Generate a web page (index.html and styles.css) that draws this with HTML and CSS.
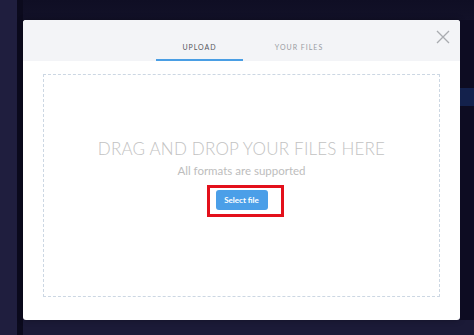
FILE: index.html
```html
<!DOCTYPE html>
<html lang="en">
<head>
    <meta charset="UTF-8">
    <meta name="viewport" content="width=device-width, initial-scale=1.0">
    <title>Upload</title>
    <link rel="stylesheet" href="styles.css">
</head>
<body>
    <div class="backdrop">
        <div class="side-band"></div>
        <div class="modal">
            <div class="modal-header">
                <div class="tabs">
                    <div class="tab active">UPLOAD</div>
                    <div class="tab">YOUR FILES</div>
                </div>
                <svg class="close" width="14" height="14" viewBox="0 0 14 14">
                    <path d="M1 1 L13 13 M13 1 L1 13" stroke="#a9abb0" stroke-width="1.3" fill="none"/>
                </svg>
            </div>
            <div class="modal-body">
                <div class="dropzone">
                    <div class="drop-title">DRAG AND DROP YOUR FILES HERE</div>
                    <div class="drop-sub">All formats are supported</div>
                    <div class="highlight">
                        <button class="button">Select file</button>
                    </div>
                </div>
            </div>
        </div>
        <div class="right-band"></div>
    </div>
</body>
</html>
```

FILE: styles.css
```css
* { padding: 0; margin: 0; box-sizing: border-box; }
body {
    font-family: "Lato", "Open Sans", sans-serif;
    background-color: #1b1a37;
    width: 474px;
    height: 335px;
    overflow: hidden;
}
.backdrop {
    display: flex;
    height: 335px;
    background: linear-gradient(#0f0e24 0, #121128 20px, #1b1a37 300px);
}
.side-band {
    width: 23px;
    flex-shrink: 0;
    background-color: #1f1e3e;
    border-right: 6px solid #0b0a1d;
}
.modal {
    width: 437px;
    flex-shrink: 0;
    height: 300px;
    margin-top: 20px;
    background-color: #fff;
    border-radius: 3px;
    box-shadow: 0 0 6px rgba(0, 0, 0, 0.3);
    display: flex;
    flex-direction: column;
}
.right-band {
    flex: 1;
    margin-top: 20px;
    height: 300px;
    background: linear-gradient(#0d0c22 0, #0d0c22 68px, #13214c 68px, #13214c 86px, #0d0c22 86px);
}
.modal-header {
    height: 41px;
    background-color: #f3f4f7;
    border-radius: 3px 3px 0 0;
    display: flex;
    justify-content: space-between;
    align-items: flex-start;
}
.tabs { display: flex; margin-left: 133px; height: 41px; align-items: flex-end; }
.tab {
    font-size: 7px;
    letter-spacing: 1px;
    color: #9a9ca3;
    text-align: center;
    padding-bottom: 6px;
    height: 18px;
    border-bottom: 2px solid transparent;
}
.tab:first-child { width: 87px; }
.tab:last-child { width: 112px; }
.tab.active { color: #55575e; border-bottom-color: #4a9ee4; }
.close { margin: 10px 10px 0 0; }
.modal-body { flex: 1; padding: 13px 20px 23px; }
.dropzone {
    height: 100%;
    border: 1px dashed #ccd7e3;
    display: flex;
    flex-direction: column;
    align-items: center;
    padding-top: 63px;
}
.drop-title { font-size: 17px; font-weight: 300; line-height: 22px; color: #c2c2c2; letter-spacing: 0.2px; }
.drop-sub { font-size: 11.5px; line-height: 16px; color: #bdbdbd; margin-top: 3px; }
.highlight {
    margin: 6px 0 0 7px;
    border: 3px solid #e3101b;
    padding: 2px 13px 4px 6px;
}
.button {
    display: block;
    width: 52px;
    height: 20px;
    font-family: "Lato", sans-serif;
    font-size: 8px;
    font-weight: 700;
    color: #fff;
    background-color: #4b9fe8;
    border: none;
    border-radius: 3px;
}
```
